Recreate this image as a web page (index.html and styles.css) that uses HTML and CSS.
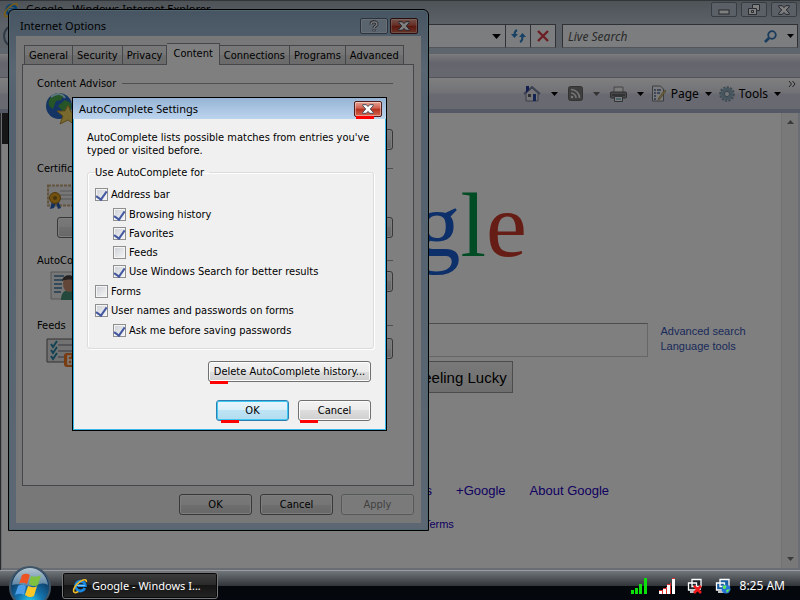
FILE: index.html
```
<!DOCTYPE html>
<html lang="en">

<head>
    <meta charset="UTF-8">
    <meta name="viewport" content="width=device-width, initial-scale=1.0">
    <title>Google - Windows Internet Explorer</title>
    <link rel="stylesheet" href="styles.css">
</head>

<body>
    <!-- shared icons -->
    <svg class="defs" width="0" height="0">
        <symbol id="ie" viewBox="0 0 18 18">
            <path d="M14.5 11.5A5.5 5.5 0 1 1 15 8.5H6.5" fill="none" stroke="#1787e0" stroke-width="3.2" />
            <path d="M5.5 8.5h9" stroke="#7cc8ff" stroke-width="1.2" />
            <path d="M16 4.5C17 1.500 13.500 1 9 4C4 7.500 .8 13 2 15.500C2.600 17 5 16.600 7 15.200" fill="none" stroke="#f0b929" stroke-width="1.8" />
        </symbol>
        <symbol id="close" viewBox="0 0 12 10">
            <path d="M.7 .7h3.600L6 2.600 7.700 .7h3.600v1L8.300 5l3 3.300v1H7.700L6 7.400 4.300 9.300H.7v-1l3-3.300-3-3.300z" fill="#fff" stroke="#464c5a" stroke-width="1" />
        </symbol>
        <symbol id="caret" viewBox="0 0 7 4">
            <path d="M0 0h7L3.500 4z" fill="currentColor" />
        </symbol>
    </svg>

    <main class="desktop">
        <section class="browser">
            <header class="titlebar">
                <svg class="ie-icon" width="16" height="16"><use href="#ie" /></svg>
                <span class="window-title">Google - Windows Internet Explorer</span>
                <button class="win-button" aria-label="Minimize">
                    <svg width="12" height="10" viewBox="0 0 12 10"><rect x="1" y="5" width="10" height="4" fill="#fff" stroke="#50565f" /></svg>
                </button>
                <button class="win-button" aria-label="Restore">
                    <svg width="12" height="11" viewBox="0 0 12 11"><path d="M4.500 .5h7v6h-3v4h-8v-6h4z" fill="#fff" stroke="#50565f" /><path d="M4.500 4.500h4v2M3.500 6.500h2v2h-2z" fill="none" stroke="#50565f" /></svg>
                </button>
                <button class="win-button" aria-label="Close"><svg width="12" height="10"><use href="#close" /></svg></button>
            </header>

            <div class="address-row">
                <button class="back" aria-label="Back"></button>
                <div class="field address">
                    <input type="text" aria-label="Address">
                    <svg class="caret" width="9" height="5"><use href="#caret" /></svg>
                </div>
                <button class="field square" aria-label="Refresh">
                    <svg width="15" height="14" viewBox="0 0 15 14">
                        <path d="M6 1C4 2 3.500 3.500 3.500 6" fill="none" stroke="#2c80c8" stroke-width="2" />
                        <path d="M0 5h7L3.500 9zM8 8h7l-3.500-4z" fill="#2c80c8" />
                        <path d="M9 13c2-1 2.500-2.500 2.500-5" fill="none" stroke="#2c80c8" stroke-width="2" />
                    </svg>
                </button>
                <button class="field square" aria-label="Stop">
                    <svg width="12" height="12" viewBox="0 0 12 12"><path d="M1 1l10 10M11 1L1 11" stroke="#d83c48" stroke-width="2.400" /></svg>
                </button>
                <div class="field live-search">
                    <input type="text" placeholder="Live Search" aria-label="Live Search">
                    <svg width="13" height="13" viewBox="0 0 13 13"><circle cx="8" cy="5" r="3.800" fill="none" stroke="#3478b8" stroke-width="1.800" /><path d="M5 8L1 12" stroke="#3478b8" stroke-width="2.600" /></svg>
                    <svg class="caret" width="7" height="4"><use href="#caret" /></svg>
                </div>
            </div>

            <div class="strip"></div>

            <nav class="commands">
                <button class="command" aria-label="Home">
                    <svg width="18" height="17" viewBox="0 0 18 17">
                        <path d="M3 8v8h12V8L9 3z" fill="#e8e8ec" stroke="#777d92" />
                        <path d="M1 9l8-7 8 7" fill="none" stroke="#7883a6" stroke-width="2" />
                        <path d="M3 1h3v4L3 8z" fill="#28369c" />
                        <path d="M10 9h3v7h-3z" fill="#2948a4" /><path d="M5 9h3v3H5z" fill="#59606c" />
                    </svg>
                    <svg class="caret" width="7" height="4"><use href="#caret" /></svg>
                </button>
                <button class="command disabled" aria-label="Feeds">
                    <svg width="15" height="15" viewBox="0 0 15 15">
                        <rect x=".5" y=".5" width="14" height="14" rx="2" fill="#7d7d7d" stroke="#666" />
                        <path d="M3 7a5 5 0 0 1 5 5M3 3.500A8.500 8.500 0 0 1 11.500 12" fill="none" stroke="#eee" stroke-width="1.600" /><circle cx="4" cy="11" r="1.300" fill="#eee" />
                    </svg>
                    <svg class="caret" width="7" height="4"><use href="#caret" /></svg>
                </button>
                <button class="command" aria-label="Print">
                    <svg width="17" height="16" viewBox="0 0 17 16">
                        <path d="M4 1h9v6H4z" fill="#f4f4f4" stroke="#8a8a8a" />
                        <rect x=".5" y="6" width="16" height="6" rx="1" fill="#8e8e92" stroke="#5c5c60" />
                        <path d="M2 9h13" stroke="#3c3c40" /><path d="M4.500 10.500h8v5h-8z" fill="#f8f8f8" stroke="#5c6870" /><path d="M6 13h5" stroke="#3288a4" />
                    </svg>
                    <svg class="caret" width="7" height="4"><use href="#caret" /></svg>
                </button>
                <button class="command">
                    <svg width="16" height="17" viewBox="0 0 16 17">
                        <path d="M1.500 1h8l3 3v12h-11z" fill="#f4f4f4" stroke="#777d82" />
                        <path d="M3 5h2M6 5h4M3 8h2M6 8h3M3 11h2M3 14h2" stroke="#536c9c" stroke-width="1.400" /><path d="M15 6l-6 8-2 1 .5-2 6-8z" fill="#d9bd68" stroke="#756c50" stroke-width=".5" />
                    </svg>
                    Page
                    <svg class="caret" width="7" height="4"><use href="#caret" /></svg>
                </button>
                <button class="command">
                    <svg width="16" height="16" viewBox="0 0 16 16">
                        <circle cx="8" cy="8" r="6.800" fill="none" stroke="#7d94a4" stroke-width="2" stroke-dasharray="2.200 1.300" />
                        <circle cx="8" cy="8" r="4.500" fill="none" stroke="#8fabbd" stroke-width="3.500" /><circle cx="8" cy="8" r="2.600" fill="#e8eef2" stroke="#6c8494" />
                    </svg>
                    Tools
                    <svg class="caret" width="7" height="4"><use href="#caret" /></svg>
                </button>
                <button class="more" aria-label="More commands">
                    <svg width="8" height="6" viewBox="0 0 8 6"><path d="M1 0l2.500 3L1 6M4.500 0L7 3 4.500 6" fill="none" stroke="#444" /></svg>
                </button>
            </nav>

            <div class="viewport">
                <div class="page">
                    <div class="google-bar"></div>
                    <h1 class="logo"><span class="blue">G</span><span class="red">o</span><span class="yellow">o</span><span class="blue">g</span><span class="green">l</span><span class="red">e</span></h1>
                    <form class="search">
                        <input type="text" class="query" aria-label="Search">
                        <div class="search-links">
                            <a href="#">Advanced search</a>
                            <a href="#">Language tools</a>
                        </div>
                    </form>
                    <div class="search-buttons">
                        <button>Google Search</button>
                        <button>I'm Feeling Lucky</button>
                    </div>
                    <div class="page-links">
                        <a href="#">Advertising Programs</a>
                        <a href="#">Business Solutions</a>
                        <a href="#">+Google</a>
                        <a href="#">About Google</a>
                    </div>
                    <p class="legal">© 2013 - <a href="#">Privacy &amp; Terms</a></p>
                </div>
                <div class="scrollbar">
                    <svg class="up" width="7" height="4"><use href="#caret" /></svg>
                    <svg width="7" height="4"><use href="#caret" /></svg>
                </div>
            </div>
        </section>

        <section class="dialog options">
            <header class="dialog-title">
                <h2>Internet Options</h2>
                <button class="help" aria-label="Help">
                    <svg width="10" height="12" viewBox="0 0 10 12"><path d="M2 4.500C2 1 8 1 8 4.200C8 6 5 6 5 8M5 9.300v2" fill="none" stroke="#454c58" stroke-width="3" /><path d="M2 4.500C2 1 8 1 8 4.200C8 6 5 6 5 8M5 9.500v1.600" fill="none" stroke="#fff" stroke-width="1.400" /></svg>
                </button>
                <button class="close" aria-label="Close"><svg width="12" height="10"><use href="#close" /></svg></button>
            </header>
            <div class="options-body">
                <div class="tabs">
                    <button class="tab">General</button>
                    <button class="tab">Security</button>
                    <button class="tab">Privacy</button>
                    <button class="tab active">Content</button>
                    <button class="tab">Connections</button>
                    <button class="tab">Programs</button>
                    <button class="tab">Advanced</button>
                </div>
                <div class="panel">
                    <section class="group advisor">
                        <h3>Content Advisor</h3>
                        <div class="group-row">
                            <svg width="36" height="34" viewBox="0 0 36 34">
                                <circle cx="13" cy="14" r="13" fill="#2868c8" /><path d="M5 5c5-5 9-5 13-2l-3 5-5 1-3 8c-6-3-5-8-2-12zM19 8l6 3c2 8-3 13-7 15l-2-8-4-4z" fill="#4caa50" /><path d="M5 5c6-5 12-3 14 1" fill="none" stroke="#b9ecff" stroke-width="2" />
                                <path d="M22 13l3 7h9l-7 5 2 8-7-5-8 4 3-8-6-5h8z" fill="#f0d35c" stroke="#b78f30" />
                            </svg>
                        </div>
                        <div class="group-actions"><button class="button" aria-label="Content Advisor settings"></button></div>
                    </section>
                    <section class="group certificates">
                        <h3>Certificates</h3>
                        <div class="group-row">
                            <svg width="36" height="26" viewBox="0 0 36 26">
                                <path d="M2 1.500h33v20H2z" fill="#eee" stroke="#c6a878" stroke-width="2" stroke-dasharray="3 1" /><path d="M14 7h20M14 11h20M14 15h20" stroke="#aaa" />
                                <path d="M6 17l-2 8 4-1 2-5 2 6 3-1-3-8z" fill="#2863bd" /><circle cx="9" cy="14" r="5.500" fill="#e0a321" stroke="#a66c12" /><circle cx="9" cy="14" r="2" fill="#8f6720" />
                            </svg>
                        </div>
                        <div class="group-actions">
                            <button class="button" aria-label="Clear SSL state"></button>
                            <button class="button" aria-label="Publishers"></button>
                        </div>
                    </section>
                    <section class="group complete">
                        <h3>AutoComplete</h3>
                        <div class="group-row">
                            <svg width="36" height="30" viewBox="0 0 36 30">
                                <path d="M5 1h30v27H5z" fill="#eee" stroke="#aaa" /><path d="M8 5h10M8 9h9M8 13h8M8 17h8M8 21h7" stroke="#3c74a0" stroke-width="1.500" />
                                <path d="M15 29c0-8 4-10 9-10s9 3 9 10z" fill="#47937b" /><ellipse cx="23" cy="13" rx="6" ry="8" fill="#c58e70" /><path d="M16 10c1-7 12-8 14 0-5-2-9-2-14 0z" fill="#49403f" />
                            </svg>
                            <button class="button" aria-label="AutoComplete settings"></button>
                        </div>
                    </section>
                    <section class="group feeds">
                        <h3>Feeds</h3>
                        <div class="group-row">
                            <svg width="36" height="30" viewBox="0 0 36 30">
                                <path d="M1 1h34v23H1z" fill="#e4e4e4" stroke="#626262" /><path d="M12 7h20M12 13h20M12 19h20" stroke="#6d6d80" /><path d="M5 6l2 3 4-6M5 12l2 3 4-6M5 18l2 3 4-6" fill="none" stroke="#2684a8" stroke-width="2" />
                                <rect x="18" y="15" width="16" height="14" rx="3" fill="#f07820" /><path d="M25 18h-3v8h4v-4h-4" fill="none" stroke="#fff" stroke-width="1.500" />
                            </svg>
                            <button class="button" aria-label="Feed settings"></button>
                        </div>
                    </section>
                </div>
                <footer class="dialog-buttons">
                    <button class="button">OK</button>
                    <button class="button">Cancel</button>
                    <button class="button" disabled>Apply</button>
                </footer>
            </div>
        </section>

        <div class="shade"></div>

        <section class="dialog autocomplete">
            <header class="dialog-title">
                <h2>AutoComplete Settings</h2>
                <button class="close marked" aria-label="Close"><svg width="12" height="10"><use href="#close" /></svg></button>
            </header>
            <form class="settings">
                <p>AutoComplete lists possible matches from entries you've typed or visited before.</p>
                <fieldset>
                    <legend>Use AutoComplete for</legend>
                    <label><input type="checkbox" checked>Address bar</label>
                    <div class="nested">
                        <label><input type="checkbox" checked>Browsing history</label>
                        <label><input type="checkbox" checked>Favorites</label>
                        <label><input type="checkbox">Feeds</label>
                        <label><input type="checkbox" checked>Use Windows Search for better results</label>
                    </div>
                    <label><input type="checkbox">Forms</label>
                    <label><input type="checkbox" checked>User names and passwords on forms</label>
                    <div class="nested">
                        <label><input type="checkbox" checked>Ask me before saving passwords</label>
                    </div>
                </fieldset>
                <div class="delete-row"><button type="button" class="button wide marked">Delete AutoComplete history...</button></div>
                <div class="confirm-row">
                    <button type="button" class="button default marked">OK</button>
                    <button type="button" class="button marked">Cancel</button>
                </div>
            </form>
        </section>
    </main>

    <footer class="taskbar">
        <button class="start" aria-label="Start">
            <svg width="42" height="42" viewBox="0 0 42 42">
                <defs>
                    <radialGradient id="orb" cx=".5" cy=".9" r=".8">
                        <stop offset="0" stop-color="#28d4f5" /><stop offset=".4" stop-color="#1474ae" /><stop offset="1" stop-color="#0a2848" />
                    </radialGradient>
                    <linearGradient id="gloss" x2="0" y2="1"><stop offset="0" stop-color="#d4e4ee" /><stop offset="1" stop-color="#668ba8" /></linearGradient>
                </defs>
                <circle cx="21" cy="21" r="20" fill="url(#orb)" stroke="#405668" stroke-width="2" />
                <path d="M3 19C4 9 12 2 21 2s17 7 18 17c-7-4-12 1-18 1s-11-3-18-1z" fill="url(#gloss)" opacity=".85" />
                <path d="M13 9c3-2 6-1 8 0l-3 9c-3-1-5-2-8 0z" fill="#ec5426" />
                <path d="M22 10c4 1 6 1 10-1l-3 10c-3 2-6 1-9-1z" fill="#7fc241" />
                <path d="M9 20c3-2 6-1 8 0l-2 9c-3-2-6-1-9 0z" fill="#4c9de8" />
                <path d="M19 20c3 1 6 2 9 0l-3 10c-3 2-6 1-9-1z" fill="#fbc927" />
            </svg>
        </button>
        <button class="task">
            <svg width="16" height="16"><use href="#ie" /></svg>
            <span>Google - Windows I...</span>
        </button>
        <div class="tray">
            <svg width="16" height="16" viewBox="0 0 16 16"><path d="M0 12h3v4H0zM4 10h3v6H4zM8 6h3v10H8zM13 0h3v16h-3z" fill="#0be00b" /></svg>
            <svg width="16" height="16" viewBox="0 0 16 16"><path d="M0 12h3v4H0zM4 10h3v6H4zM8 6h3v10H8zM13 0h3v16h-3z" fill="#fff" /><path d="M0 12.500h3M4 10.500h3M8 6.500h3M13 .5h3M3.500 12v4M7.500 9v7M11.500 5v11" stroke="#e03030" /></svg>
            <svg width="16" height="16" viewBox="0 0 16 16"><path d="M5 1.500h9v7H5zM1.500 5h8v7h-8zM3 14h6M11 11h3" fill="#1c2026" stroke="#fff" stroke-width="1.300" /><path d="M7 8l7 7M14 8l-7 7" stroke="#f01818" stroke-width="2.600" /></svg>
            <svg width="16" height="16" viewBox="0 0 16 16"><path d="M5 1.500h9v7H5zM1.500 5h8v7h-8zM3 14h6" fill="#175c9e" stroke="#fff" stroke-width="1.300" /><circle cx="11" cy="11" r="4.500" fill="#2573d8" /><path d="M8 8c3-2 4 0 3 2s-2 0-3 1zM11 12l4-1-3 4z" fill="#5de858" /></svg>
            <time>8:25 AM</time>
        </div>
    </footer>
</body>

</html>
```
FILE: styles.css
```
* {
    box-sizing: border-box;
}

body {
    margin: 0;
    height: 100vh;
    display: flex;
    flex-direction: column;
    overflow: hidden;
    font-family: "DejaVu Sans Condensed", "DejaVu Sans", sans-serif;
    font-size: 11px;
    line-height: 13px;
    color: #000;
}

h1,
h2,
h3,
p {
    margin: 0;
    font-size: inherit;
    font-weight: normal;
}

button,
input {
    margin: 0;
    padding: 0;
    font: inherit;
    color: inherit;
}

svg {
    flex: none;
}

.defs {
    position: absolute;
}

.desktop {
    position: relative;
    flex: 1;
    min-height: 0;
}

.shade {
    position: absolute;
    inset: 0;
    background: rgba(0, 0, 0, 0.5);
    pointer-events: none;
}

/* browser */
.browser {
    height: 100%;
    display: flex;
    flex-direction: column;
    background: #d4dce8;
}

.titlebar {
    display: flex;
    align-items: flex-start;
    gap: 4px;
    height: 24px;
    padding: 1px 3px 0;
    border-top: 1px solid #656b72;
    background: linear-gradient(#9da7b1, #b8c4d0);
}

.window-title {
    flex: 1;
    padding-left: 3px;
    font-family: "Noto Sans", sans-serif;
    font-size: 11px;
    line-height: 14px;
}

.win-button {
    display: flex;
    align-items: center;
    justify-content: center;
    width: 26px;
    height: 15px;
    border: 1px solid #6c7885;
    border-radius: 2px;
    background: #b5c1cd;
}

.address-row {
    display: flex;
    height: 24px;
    padding: 0 2px 0 3px;
    background: #b8c4d0;
}

.back {
    width: 24px;
    border: 2px solid #65748a;
    border-radius: 50%;
    background: #bccada;
}

.field {
    display: flex;
    align-items: center;
    justify-content: center;
    border: 1px solid #5c636b;
    border-bottom-color: #a5adb5;
    background: #f8fafc;
}

.field input {
    flex: 1;
    min-width: 0;
    border: none;
    outline: none;
    background: none;
}

.address {
    flex: 1;
    margin-left: 30px;
    padding-right: 4px;
}

.square {
    width: 25px;
    border-left: none;
}

.live-search {
    width: 236px;
    margin-left: 6px;
    padding: 0 3px 0 5px;
    gap: 10px;
    font-family: "Noto Sans", sans-serif;
    font-size: 12px;
}

.live-search input::placeholder {
    color: #555;
    font-style: italic;
}

.caret {
    color: #000;
}

.strip {
    height: 30px;
    border-top: 6px solid #bccbda;
    border-bottom: 1px solid #a4a6b8;
    background: linear-gradient(#f8f8fb, #c8cada 40%, #cfd0e0);
}

.commands {
    display: flex;
    align-items: center;
    justify-content: flex-end;
    height: 35px;
    padding: 0 4px 0;
    border-bottom: 4px solid #a9b3ca;
    background: linear-gradient(#fff, #e5e6ef 45%, #d1d2e2 55%, #d1d2e2);
    font-family: "Noto Sans", sans-serif;
    font-size: 12px;
}

.command {
    display: flex;
    align-items: center;
    gap: 4px;
    margin-right: 7px;
    border: none;
    background: none;
}

.command .caret {
    margin-left: 2px;
}

.command:nth-child(-n+3) .caret {
    margin-left: 6px;
}

.command:nth-child(-n+2) {
    margin-right: 10px;
}

.command.disabled .caret {
    color: #666;
}

.more {
    display: flex;
    align-self: flex-start;
    padding: 3px 0 0;
    border: none;
    background: none;
}

.viewport {
    flex: 1;
    min-height: 0;
    display: flex;
    padding: 0 2px 2px 1px;
    border-left: 1px solid #555;
}

.page {
    flex: 1;
    display: flex;
    flex-direction: column;
    align-items: center;
    background: #fff;
    font-family: "Liberation Sans", Arial, sans-serif;
}

.page a {
    color: #2200c1;
    text-decoration: none;
}

.google-bar {
    align-self: flex-start;
    width: 50%;
    height: 31px;
    background: #2d2d2d;
}

.logo {
    margin-top: 28px;
    font-family: "Liberation Serif", "Times New Roman", serif;
    font-size: 92px;
    line-height: 106px;
}

.blue {
    color: #1b5fd4;
}

.red {
    color: #cd3b2a;
}

.yellow {
    color: #e8b022;
}

.green {
    color: #00984a;
}

.search {
    position: relative;
    margin-top: 45px;
}

.query {
    display: block;
    width: 512px;
    height: 34px;
    border: 1px solid #ccc;
    border-top-color: #999;
    background: #fff;
}

.search-links {
    position: absolute;
    top: 1px;
    left: 100%;
    padding-left: 13px;
    white-space: nowrap;
    line-height: 15px;
}

.search-links a {
    display: block;
    color: #3454b4;
}

.search-buttons {
    display: flex;
    gap: 2px;
    margin-top: 4px;
}

.search-buttons button {
    height: 32px;
    padding: 0 5px;
    border: 1px solid #999;
    background: linear-gradient(#f2f2f2, #ddd);
    font-size: 15px;
}

.page-links {
    display: flex;
    gap: 24px;
    margin-top: 90px;
    font-size: 13px;
    line-height: 16px;
}

.legal {
    margin-top: 19px;
}

.scrollbar {
    display: flex;
    flex-direction: column;
    align-items: center;
    justify-content: space-between;
    width: 17px;
    padding: 7px 0;
    background: #f2f2f2;
    border-left: 1px solid #e4e4e4;
    color: #777;
}

.up {
    transform: rotate(180deg);
}

/* dialogs */
.dialog {
    position: absolute;
    isolation: isolate;
    display: flex;
    flex-direction: column;
    border: 1px solid #000;
}

.dialog-title {
    display: flex;
    align-items: center;
    font-family: "Noto Sans", sans-serif;
    font-size: 11px;
    line-height: 16px;
}

.dialog-title h2 {
    flex: 1;
}

.close,
.help {
    display: flex;
    align-items: center;
    justify-content: center;
    width: 28px;
    height: 16px;
    border: 1px solid #501c1c;
    border-radius: 2px;
    background: linear-gradient(#e5a494, #cf5d4c 45%, #b3301c 50%, #d46650);
    box-shadow: inset 0 0 0 1px rgba(255, 255, 255, 0.4);
}

.help {
    margin-right: 2px;
    border-color: #56687c;
    background: #b5c9dd;
}

.button {
    min-width: 73px;
    height: 21px;
    border: 1px solid #707070;
    border-radius: 3px;
    background: linear-gradient(#f2f2f2, #ebebeb 50%, #ddd 50%, #cfcfcf);
    box-shadow: inset 0 0 0 1px #fcfcfc;
}

.button:disabled {
    border-color: #adb2b5;
    background: #f4f4f4;
    color: #838383;
}

.options {
    left: 8px;
    top: 9px;
    width: 421px;
    height: 522px;
    padding: 0 7px 7px;
    border-radius: 6px 6px 0 0;
    background: linear-gradient(#8fabc5, #b4cce4 60px, #a9c2dc 95px, #b8cfe6);
    box-shadow: inset 0 0 0 1px #9ccbe0;
}

.options .dialog-title {
    height: 26px;
    padding: 5px 3px 0 4px;
}

.options-body {
    flex: 1;
    display: flex;
    flex-direction: column;
    padding: 7px 7px 8px 6px;
    background: #f0f0f0;
}

.tabs {
    display: flex;
    align-items: flex-end;
    padding-left: 2px;
}

.tab {
    height: 19px;
    padding: 0 4px;
    border: 1px solid #898c95;
    border-bottom: none;
    border-left-width: 0;
    background: linear-gradient(#f2f2f2, #ebebeb 50%, #ddd 50%, #d5d5d5);
}

.tab:first-child {
    border-left-width: 1px;
}

.tab.active {
    z-index: 1;
    height: 22px;
    margin-bottom: -1px;
    padding: 0 6px 2px;
    background: #fff;
}

.panel {
    flex: 1;
    padding: 12px 20px 0 14px;
    border: 1px solid #898c95;
    background: #fff;
}

.group h3 {
    display: flex;
    align-items: center;
    gap: 6px;
}

.group h3::after {
    content: "";
    flex: 1;
    height: 1px;
    background: #a0a0a0;
}

.group-row {
    display: flex;
    align-items: flex-start;
    justify-content: space-between;
    padding-left: 9px;
}

.group-actions {
    display: flex;
    justify-content: space-between;
    padding-left: 20px;
}

.advisor {
    height: 85px;
}

.advisor .group-row {
    padding-top: 2px;
}

.advisor .group-actions {
    justify-content: flex-end;
    padding-top: 3px;
}

.certificates {
    height: 92px;
}

.certificates .group-row {
    padding-top: 9px;
}

.certificates .group-actions {
    padding-top: 7px;
}

.complete {
    height: 65px;
}

.complete .group-row {
    padding-top: 4px;
}

.feeds .group-row {
    padding-top: 6px;
}

.dialog-buttons {
    display: flex;
    justify-content: flex-end;
    gap: 8px;
    padding-top: 8px;
}

/* AutoComplete settings */
.autocomplete {
    left: 72px;
    top: 97px;
    width: 315px;
    background: #f0f0f0;
    box-shadow: inset 0 0 0 1px #38b8e8;
}

.autocomplete .dialog-title {
    height: 21px;
    padding: 1px 4px 0 6px;
    background: linear-gradient(#96b4d4, #bcd4ee);
}

.settings {
    padding: 12px 12px 9px 14px;
}

fieldset {
    margin: 9px 0 0;
    padding: 6px 8px 7px 7px;
    border: 1px solid #dcdcdc;
    border-radius: 3px;
    box-shadow: inset 1px 1px #fff, 1px 1px #fff;
}

legend {
    padding: 0 5px 0 0;
}

fieldset label {
    display: flex;
    align-items: center;
    gap: 3px;
    height: 19px;
}

.nested {
    margin: 1px 0;
    padding-left: 18px;
}

input[type="checkbox"] {
    appearance: none;
    display: grid;
    place-items: center;
    width: 13px;
    height: 13px;
    border: 1px solid #8e8f8f;
    background: linear-gradient(135deg, #cbcfd5, #f6f6f6);
    box-shadow: inset 0 0 0 1px #f4f4f4;
}

input[type="checkbox"]:checked::after {
    content: "";
    width: 5px;
    height: 9px;
    margin-bottom: 2px;
    border: solid #4358a0;
    border-width: 0 2px 2px 0;
    transform: rotate(35deg);
}

.delete-row,
.confirm-row {
    display: flex;
    justify-content: flex-end;
    gap: 9px;
    padding: 12px 3px 0 0;
}

.confirm-row {
    padding-top: 18px;
}

.wide {
    width: 163px;
}

.default {
    border-color: #2c7fae;
    background: linear-gradient(#eaf5fb, #d9eff9 50%, #bee3f5 50%, #b2dcf0);
    box-shadow: inset 0 0 0 1px #3fc8f4;
}

/* red underline on the controls to click */
.marked {
    position: relative;
}

.marked::after {
    content: "";
    position: absolute;
    left: 1px;
    bottom: -3px;
    width: 18px;
    height: 3px;
    background: #f00;
}

.default.marked::after {
    left: 4px;
}

/* taskbar */
.taskbar {
    display: flex;
    align-items: center;
    height: 30px;
    border-top: 1px solid #989ca0;
    background: linear-gradient(#70757a, #33373c 50%, #04080c 50%, #04080e);
    font-family: "Noto Sans", sans-serif;
    font-size: 12px;
    color: #fff;
}

.start {
    position: relative;
    align-self: flex-start;
    display: flex;
    margin: -5px 11px 0 9px;
    border: none;
    background: none;
}

.task {
    display: flex;
    align-items: center;
    gap: 4px;
    width: 156px;
    height: 27px;
    padding: 0 9px;
    border: 1px solid #777;
    border-radius: 3px;
    background: linear-gradient(#3d3d3d, #292929 50%, #151515 50%, #242424);
    box-shadow: inset 0 0 0 1px #080808;
    font-size: 11px;
    white-space: nowrap;
}

.tray {
    display: flex;
    align-items: center;
    gap: 12px;
    margin-left: auto;
    padding-right: 15px;
}

.tray time {
    margin-left: -3px;
}
```
